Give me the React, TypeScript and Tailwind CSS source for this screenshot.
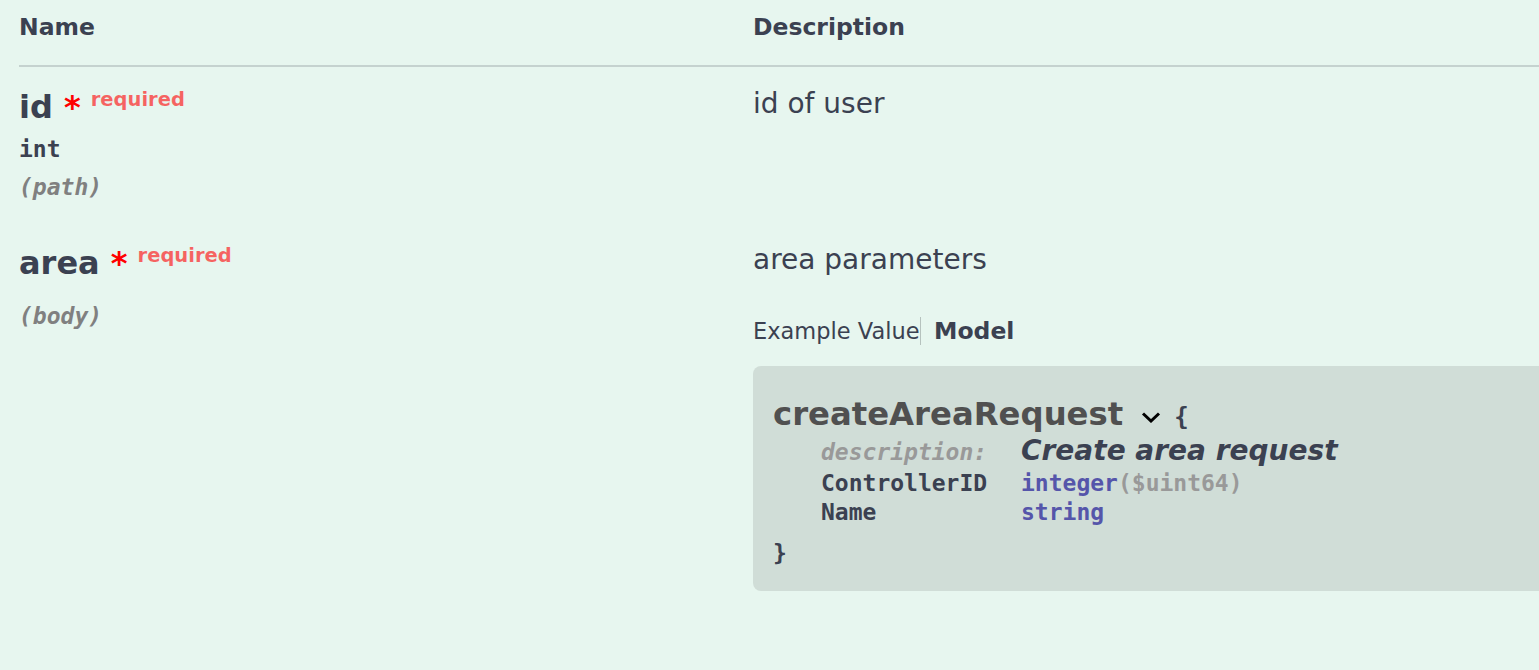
import React from "react";

const sans = "font-['DejaVu_Sans',sans-serif]";
const mono = "font-['DejaVu_Sans_Mono',monospace]";

function ParamName({ name }: { name: string }) {
  return (
    <div className="text-[32px] leading-[36px] font-bold whitespace-nowrap">
      {name}
      <span className="text-[#ff0000]"> *</span>
      <span className="pl-[10px] text-[19.5px] leading-none align-[12px] text-[rgba(255,0,0,0.6)]">
        required
      </span>
    </div>
  );
}

export default function App() {
  return (
    <div className={`w-[1539px] h-[670px] overflow-hidden bg-[#e7f6ef] text-[#3b4151] ${sans}`}>
      <div className="pl-[19px] w-[1700px]">
        {/* header */}
        <div className="grid grid-cols-[734px_1fr] border-b-2 border-[#c5d2cf]">
          <div className="pt-[13px] pb-[24px] text-[23.5px] leading-[28px] font-bold">Name</div>
          <div className="pt-[13px] pb-[24px] text-[23.5px] leading-[28px] font-bold">Description</div>
        </div>

        {/* row id */}
        <div className="grid grid-cols-[734px_1fr] py-[22px]">
          <div>
            <ParamName name="id" />
            <div className={`py-[11px] text-[23px] leading-[27px] font-semibold ${mono}`}>int</div>
            <div className={`text-[23px] leading-[27px] font-semibold italic text-[#808080] ${mono}`}>(path)</div>
          </div>
          <div className="text-[28px] leading-[29px]">id of user</div>
        </div>

        {/* row area */}
        <div className="grid grid-cols-[734px_1fr] py-[22px]">
          <div>
            <ParamName name="area" />
            <div className={`py-[11px] text-[23px] leading-[27px] font-semibold ${mono}`}></div>
            <div className={`text-[23px] leading-[27px] font-semibold italic text-[#808080] ${mono}`}>(body)</div>
          </div>
          <div>
            <div className="text-[28px] leading-[29px]">area parameters</div>
            <div className="mt-[42px] flex items-center h-[30px]">
              <span className="text-[22.5px] leading-[30px]">Example Value</span>
              <span className="w-[1.5px] h-[28px] bg-[#b6c2be]" />
              <span className="ml-[13px] text-[23.5px] leading-[30px] font-bold">Model</span>
            </div>
            <div className="mt-[20px] rounded-[8px] bg-[#d0ddd7] pl-[20px] pt-[28px] pb-[23px]">
              <div className="flex items-baseline">
                <span className="text-[32.3px] leading-[40px] font-bold text-[#505050]">createAreaRequest</span>
                <span className="self-start mt-[18px] ml-[18px]">
                  <svg width="20" height="11" viewBox="0 0 20 11" fill="none">
                    <path d="M2 1.5 L10 9 L18 1.5" stroke="#000" strokeWidth="3" />
                  </svg>
                </span>
                <span className={`ml-[13px] text-[24px] leading-[40px] font-semibold ${mono}`}>{"{"}</span>
              </div>
              <div className="ml-[48px]">
                <div className="flex items-baseline mb-[3px]">
                  <span className={`w-[200px] shrink-0 text-[23px] leading-[27px] italic font-semibold text-[#999999] ${mono}`}>
                    description:
                  </span>
                  <span className="text-[28px] leading-[27px] font-bold italic">Create area request</span>
                </div>
                <div className={`flex text-[23px] leading-[29px] font-semibold ${mono}`}>
                  <span className="w-[200px] shrink-0">ControllerID</span>
                  <span>
                    <span className="text-[#5555aa]">integer</span>
                    <span className="text-[#999999]">($uint64)</span>
                  </span>
                </div>
                <div className={`flex text-[23px] leading-[29px] font-semibold ${mono}`}>
                  <span className="w-[200px] shrink-0">Name</span>
                  <span className="text-[#5555aa]">string</span>
                </div>
              </div>
              <div className={`mt-[12px] text-[23px] leading-[29px] font-semibold ${mono}`}>{"}"}</div>
            </div>
          </div>
        </div>
      </div>
    </div>
  );
}
